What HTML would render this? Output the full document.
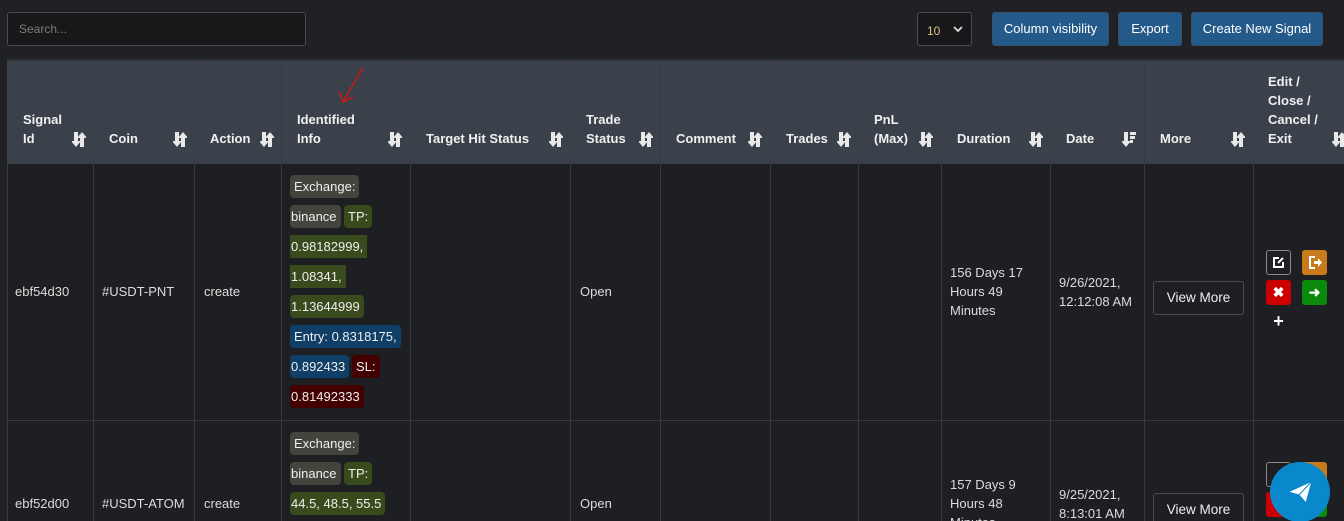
<!DOCTYPE html>
<html><head><style>
*{margin:0;padding:0;box-sizing:border-box}
html,body{width:1344px;height:521px;overflow:hidden}
body{background:#202124;font-family:"Liberation Sans",sans-serif;font-size:13px;color:#e6e6e6;position:relative}
.a{position:absolute}
.search{left:7px;top:12px;width:299px;height:34px;border:1px solid #4a4b4e;border-radius:3px;background:#17181a;color:#7d7d7d;padding:9px 11px;font-size:12px}
.sel{left:917px;top:12px;width:55px;height:34px;border:1px solid #4a4b4e;border-radius:3px;background:#17181a;color:#e0c080;font-size:12px;padding:11px 9px}
.btn{top:12px;height:34px;background:#245a8a;border:1px solid #35506a;border-radius:3px;color:#fff;font-size:13px;text-align:center;line-height:32px}
.tbl{left:7px;top:59px;width:1337px;height:462px;background:#1e1f22;border-left:1px solid #3a3b3e}
.hd{left:7px;top:59px;width:1337px;height:104px;background:#3a414a;border-top:2px solid #2e3238}
.vl{top:59px;width:1px;height:462px;background:#393a3d}
.hl{left:7px;width:1337px;height:1px;background:#3a3b3e}
.h{color:#f0f0f0;font-weight:bold;font-size:13px;line-height:19px}
.s{width:14px;height:15px}
.t{color:#dcdcdc;font-size:13px;line-height:19px}
.b{position:absolute;height:23px;line-height:23px;padding:0 4px;color:#eee;font-size:13px;border-radius:4px}
.ex{background:#45443c}.tp{background:#394a1d}.en{background:#0f3e66}.sl{background:#420000}
.vm{width:91px;height:34px;border:1px solid #4a4b4e;border-radius:3px;color:#eee;font-size:13.5px;text-align:center;line-height:32px}
.ic{width:25px;height:25px;border-radius:3px;color:#fff;font-weight:bold;text-align:center;line-height:25px;font-size:14px}
</style></head><body>
<svg width="0" height="0" style="position:absolute"><defs><g id="so"><path d="M1 0h4v9h3l-5 6l-5-6h3z" transform="translate(1,0)" fill="#e8e8e8"/><path d="M9 15h4v-9h3l-5-6l-5 6h3z" transform="translate(-1,0)" fill="#e8e8e8"/></g></defs></svg>
<div class="a search">Search...</div>
<div class="a sel">10 <svg style="position:absolute;right:8px;top:13px" width="10" height="7"><path d="M1 1l4 4l4-4" stroke="#ddd" stroke-width="1.8" fill="none"/></svg></div>
<div class="a btn" style="left:992px;width:117px">Column visibility</div>
<div class="a btn" style="left:1118px;width:64px">Export</div>
<div class="a btn" style="left:1191px;width:132px">Create New Signal</div>

<div class="a tbl"></div>
<div class="a hd"></div>
<div class="a hl" style="top:163px"></div>
<div class="a hl" style="top:420px"></div>
<div class="a vl" style="left:93px"></div><div class="a vl" style="left:194px"></div><div class="a vl" style="left:281px"></div><div class="a vl" style="left:410px"></div><div class="a vl" style="left:570px"></div><div class="a vl" style="left:660px"></div><div class="a vl" style="left:770px"></div><div class="a vl" style="left:858px"></div><div class="a vl" style="left:941px"></div><div class="a vl" style="left:1050px"></div><div class="a vl" style="left:1144px"></div><div class="a vl" style="left:1253px"></div>

<div class="a h" style="left:23px;top:110px">Signal<br>Id</div><svg class="a s" style="left:72px;top:132px"><use href="#so"/></svg>
<div class="a h" style="left:109px;top:129px">Coin</div><svg class="a s" style="left:173px;top:132px"><use href="#so"/></svg>
<div class="a h" style="left:210px;top:129px">Action</div><svg class="a s" style="left:260px;top:132px"><use href="#so"/></svg>
<div class="a h" style="left:297px;top:110px">Identified<br>Info</div><svg class="a s" style="left:388px;top:132px"><use href="#so"/></svg>
<div class="a h" style="left:426px;top:129px">Target Hit Status</div><svg class="a s" style="left:549px;top:132px"><use href="#so"/></svg>
<div class="a h" style="left:586px;top:110px">Trade<br>Status</div><svg class="a s" style="left:639px;top:132px"><use href="#so"/></svg>
<div class="a h" style="left:676px;top:129px">Comment</div><svg class="a s" style="left:748px;top:132px"><use href="#so"/></svg>
<div class="a h" style="left:786px;top:129px">Trades</div><svg class="a s" style="left:837px;top:132px"><use href="#so"/></svg>
<div class="a h" style="left:874px;top:110px">PnL<br>(Max)</div><svg class="a s" style="left:919px;top:132px"><use href="#so"/></svg>
<div class="a h" style="left:957px;top:129px">Duration</div><svg class="a s" style="left:1029px;top:132px"><use href="#so"/></svg>
<div class="a h" style="left:1066px;top:129px">Date</div><svg class="a s" style="left:1122px;top:132px"><path d="M2 0h4v9h3l-5 6l-5-6h3z" fill="#e8e8e8"/><path d="M8 0h6v3h-6zM8 4h5v3h-5zM8 8h3v3h-3z" fill="#e8e8e8"/></svg>
<div class="a h" style="left:1160px;top:129px">More</div><svg class="a s" style="left:1231px;top:132px"><use href="#so"/></svg>
<div class="a h" style="left:1268px;top:72px">Edit /<br>Close /<br>Cancel /<br>Exit</div><svg class="a s" style="left:1332px;top:132px"><use href="#so"/></svg>
<svg class="a" style="left:336px;top:66px" width="30" height="40"><path d="M27 2 C22 10 16 20 7 36 M3 25 L7 36 L17 31" stroke="#e01010" stroke-width="1.3" fill="none"/></svg>

<div class="a t" style="left:15px;top:282px">ebf54d30</div>
<div class="a t" style="left:102px;top:282px">#USDT-PNT</div>
<div class="a t" style="left:204px;top:282px">create</div>
<div class="b ex" style="left:290px;top:175px">Exchange:</div>
<div class="b ex" style="left:290px;top:205px;padding-left:1px">binance</div>
<div class="b tp" style="left:344px;top:205px">TP:</div>
<div class="b tp" style="left:290px;top:235px;padding-left:1px;border-radius:0">0.98182999,</div>
<div class="b tp" style="left:290px;top:265px;padding-left:1px;border-radius:0">1.08341,</div>
<div class="b tp" style="left:290px;top:295px;padding-left:1px">1.13644999</div>
<div class="b en" style="left:290px;top:325px">Entry: 0.8318175,</div>
<div class="b en" style="left:290px;top:355px;padding-left:1px">0.892433</div>
<div class="b sl" style="left:352px;top:355px">SL:</div>
<div class="b sl" style="left:290px;top:385px;padding-left:1px">0.81492333</div>
<div class="a t" style="left:580px;top:282px">Open</div>
<div class="a t" style="left:950px;top:263px">156 Days 17<br>Hours 49<br>Minutes</div>
<div class="a t" style="left:1059px;top:273px">9/26/2021,<br>12:12:08 AM</div>
<div class="a vm" style="left:1153px;top:281px">View More</div>
<div class="a ic" style="left:1266px;top:250px;border:1px solid #888"><svg width="23" height="23"><path d="M12 7H7v9h9v-5" stroke="#fff" stroke-width="2" fill="none"/><path d="M11 12l5-5" stroke="#fff" stroke-width="2"/></svg></div>
<div class="a ic" style="left:1302px;top:250px;background:#c97a1a"><svg width="25" height="25"><path d="M13 7H8v11h5" stroke="#fff" stroke-width="2" fill="none"/><path d="M12 11h4v-3l4 4.5l-4 4.5v-3h-4z" fill="#fff"/></svg></div>
<div class="a ic" style="left:1266px;top:280px;background:#cc0000">✖</div>
<div class="a ic" style="left:1302px;top:280px;background:#0a8a0a">➜</div>
<div class="a ic" style="left:1266px;top:309px;font-size:18px">+</div>

<div class="a t" style="left:15px;top:494px">ebf52d00</div>
<div class="a t" style="left:102px;top:494px">#USDT-ATOM</div>
<div class="a t" style="left:204px;top:494px">create</div>
<div class="b ex" style="left:290px;top:432px">Exchange:</div>
<div class="b ex" style="left:290px;top:462px;padding-left:1px">binance</div>
<div class="b tp" style="left:344px;top:462px">TP:</div>
<div class="b tp" style="left:290px;top:492px;padding-left:1px">44.5, 48.5, 55.5</div>
<div class="a t" style="left:580px;top:494px">Open</div>
<div class="a t" style="left:950px;top:475px">157 Days 9<br>Hours 48<br>Minutes</div>
<div class="a t" style="left:1059px;top:485px">9/25/2021,<br>8:13:01 AM</div>
<div class="a vm" style="left:1153px;top:493px">View More</div>
<div class="a ic" style="left:1266px;top:462px;border:1px solid #888"></div>
<div class="a ic" style="left:1302px;top:462px;background:#c97a1a"></div>
<div class="a ic" style="left:1266px;top:492px;background:#cc0000"></div>
<div class="a ic" style="left:1302px;top:492px;background:#0a8a0a"></div>
<div class="a" style="left:1270px;top:462px;width:60px;height:60px;border-radius:50%;background:#0a88cc"></div>
<svg class="a" style="left:1286px;top:479px" width="28" height="26"><path d="M2 13 L26 2 L20 24 L13 16 Z M13 16 L26 2" fill="#fff" stroke="#0a88cc" stroke-width="1"/></svg>
</body></html>
